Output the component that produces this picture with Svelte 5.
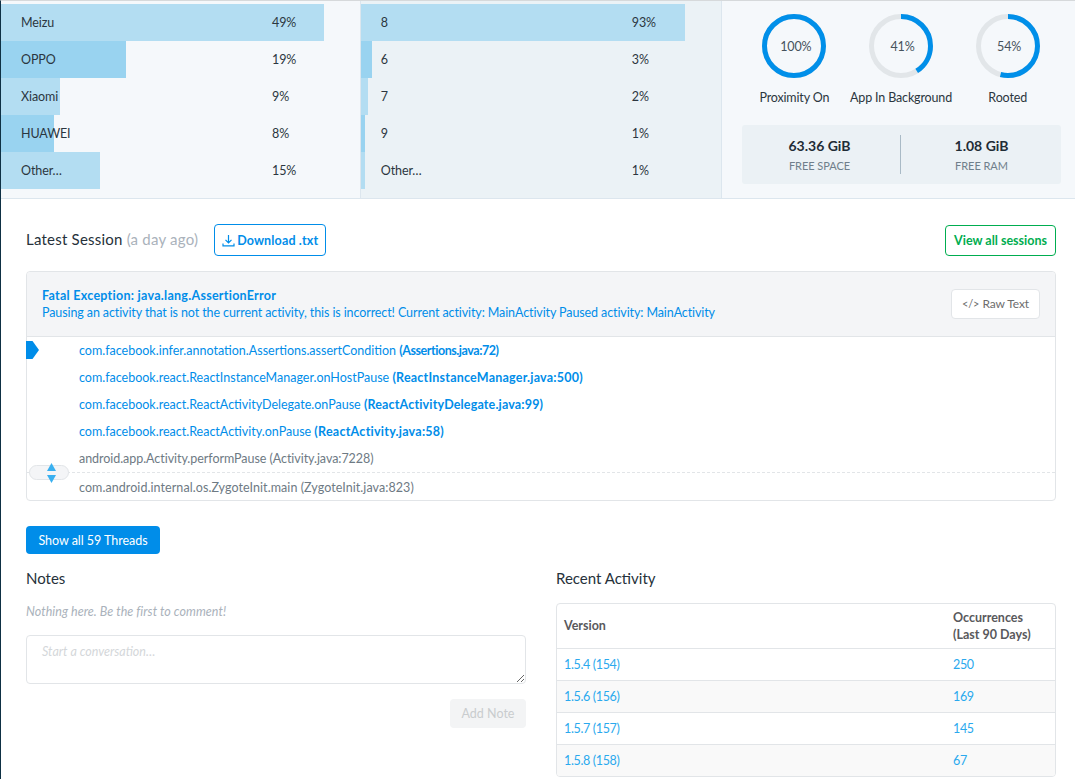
<script>
  const brands = [
    { label: 'Meizu', pct: '49%', w: 323, dark: false },
    { label: 'OPPO', pct: '19%', w: 125, dark: true },
    { label: 'Xiaomi', pct: '9%', w: 59, dark: false },
    { label: 'HUAWEI', pct: '8%', w: 53, dark: true },
    { label: 'Other…', pct: '15%', w: 99, dark: false }
  ];
  const models = [
    { label: '8', pct: '93%', w: 324, dark: false },
    { label: '6', pct: '3%', w: 11, dark: true },
    { label: '7', pct: '2%', w: 7, dark: false },
    { label: '9', pct: '1%', w: 4, dark: true },
    { label: 'Other…', pct: '1%', w: 4, dark: false }
  ];
  const C = 2 * Math.PI * 29.5;
  const rings = [
    { label: 'Proximity On', v: 100 },
    { label: 'App In Background', v: 41 },
    { label: 'Rooted', v: 54 }
  ];
  const frames = [
    ['com.facebook.infer.annotation.Assertions.assertCondition', '(Assertions.java:72)', -0.45],
    ['com.facebook.react.ReactInstanceManager.onHostPause', '(ReactInstanceManager.java:500)', 0.22],
    ['com.facebook.react.ReactActivityDelegate.onPause', '(ReactActivityDelegate.java:99)', 0.16],
    ['com.facebook.react.ReactActivity.onPause', '(ReactActivity.java:58)', 0.25]
  ];
  const versions = [
    ['1.5.4 (154)', '250'],
    ['1.5.6 (156)', '169'],
    ['1.5.7 (157)', '145'],
    ['1.5.8 (158)', '67']
  ];
</script>

<div class="page">
  <section class="top">
    <div class="col col-a">
      {#each brands as b}
        <div class="row">
          <span class="fill" class:dark={b.dark} style="width:{b.w}px"></span>
          <span class="lab">{b.label}</span><span class="pct">{b.pct}</span>
        </div>
      {/each}
    </div>
    <div class="col col-b">
      {#each models as b}
        <div class="row">
          <span class="fill" class:dark={b.dark} style="width:{b.w}px"></span>
          <span class="lab">{b.label}</span><span class="pct">{b.pct}</span>
        </div>
      {/each}
    </div>
    <div class="col-c">
      <div class="rings">
        {#each rings as r}
          <div class="ring">
            <div class="dial">
              <svg width="64" height="64" viewBox="0 0 64 64">
                <circle cx="32" cy="32" r="29.5" fill="none" stroke="#e2e6e9" stroke-width="5" />
                <circle cx="32" cy="32" r="29.5" fill="none" stroke="#008fe9" stroke-width="5"
                  stroke-dasharray="{(C * r.v) / 100} {C}" transform="rotate(-90 32 32)" />
              </svg>
              <span class="val">{r.v}%</span>
            </div>
            <div class="ring-label">{r.label}</div>
          </div>
        {/each}
      </div>
      <div class="free">
        <div class="free-cell left"><b>63.36 GiB</b><span>FREE SPACE</span></div>
        <i class="free-div"></i>
        <div class="free-cell right"><b>1.08 GiB</b><span>FREE RAM</span></div>
      </div>
    </div>
  </section>

  <main class="main">
    <div class="head">
      <h2>Latest Session <span class="ago">(a day ago)</span></h2>
      <button class="btn-dl">
        <svg width="13" height="13" viewBox="0 0 13 13" fill="none" stroke="#008de9" stroke-width="1.2">
          <path d="M6.5 1v7.5M3.5 5.8l3 3 3-3M1 9.5v2.3h11V9.5" />
        </svg>
        Download .txt
      </button>
      <button class="btn-green">View all sessions</button>
    </div>

    <div class="session">
      <div class="ex">
        <div class="ex-text">
          <strong>Fatal Exception: java.lang.AssertionError</strong>
          <div class="msg">Pausing an activity that is not the current activity, this is incorrect! Current activity: MainActivity Paused activity: MainActivity</div>
        </div>
        <button class="raw"><span class="code">&lt;/&gt;</span><span>Raw Text</span></button>
      </div>
      <div class="stack">
        <svg class="marker" width="13" height="18" viewBox="0 0 13 18"><path d="M0 0h6.5l6.5 9-6.5 9H0z" fill="#008de9" /></svg>
        {#each frames as f}
          <div class="frame app">{f[0]} <b style="letter-spacing:{f[2]}px">{f[1]}</b></div>
        {/each}
        <div class="frame sys perform">android.app.Activity.performPause (Activity.java:7228)</div>
        <div class="fold">
          <span class="pill">
            <svg width="9" height="20" viewBox="0 0 9 20"><path d="M4.5 0L9 8H0zM4.5 20L0 12h9z" fill="#39b0f0" /></svg>
          </span>
        </div>
        <div class="frame sys last">com.android.internal.os.ZygoteInit.main (ZygoteInit.java:823)</div>
      </div>
    </div>

    <button class="threads">Show all 59 Threads</button>

    <div class="bottom">
      <div class="notes">
        <h2>Notes</h2>
        <p class="empty">Nothing here. Be the first to comment!</p>
        <textarea placeholder="Start a conversation…"></textarea>
        <div class="note-act"><button class="add">Add Note</button></div>
      </div>
      <div class="recent">
        <h2>Recent Activity</h2>
        <table>
          <thead>
            <tr><th class="ver">Version</th><th class="c2">Occurrences<br />(Last 90 Days)</th></tr>
          </thead>
          <tbody>
            {#each versions as v}
              <tr><td>{v[0]}</td><td class="c2">{v[1]}</td></tr>
            {/each}
          </tbody>
        </table>
      </div>
    </div>
  </main>
</div>

<style>
  :global(body) { margin: 0; background: #fff; }
  .page {
    font-family: Lato, "Liberation Sans", sans-serif;
    font-size: 12.5px;
    color: #2b3640;
    border-left: 1px solid #0e3044;
    border-top: 1px solid #d6d9db;
    min-height: 779px;
    box-sizing: border-box;
    overflow: hidden;
  }
  .top {
    display: flex;
    height: 198px;
    box-sizing: border-box;
    border-bottom: 1px solid #dce6ee;
    background: #f5f8fb;
  }
  .col { box-sizing: border-box; padding-top: 3px; }
  .col-a { width: 360px; border-right: 1px solid #dce6ee; }
  .col-b { width: 361px; background: #ebf2f6; border-right: 1px solid #dce6ee; }
  .row { position: relative; height: 37px; display: flex; align-items: center; }
  .fill { position: absolute; left: 0; top: 0; bottom: 0; background: #b3ddf2; }
  .fill.dark { background: #99d3f0; }
  .lab { position: relative; width: 251px; padding-left: 20px; letter-spacing: -.1px; }
  .pct { position: relative; letter-spacing: -.1px; }
  .col-c { flex: 1; padding: 13px 14px 0 20px; }
  .rings { display: flex; justify-content: space-between; width: 320px; margin-left: -0.5px; }
  .ring { width: 107px; display: flex; flex-direction: column; align-items: center; }
  .dial { position: relative; width: 64px; height: 64px; }
  .dial svg { display: block; }
  .val { position: absolute; inset: 0; padding-left: 3px; display: flex; align-items: center; justify-content: center; color: #46525c; letter-spacing: -.1px; }
  .ring-label { margin-top: 12px; white-space: nowrap; line-height: 16px; color: #2b3640; letter-spacing: -.15px; }
  .free {
    margin-top: 19px;
    height: 59px;
    width: 319px;
    background: #ebf1f5;
    border-radius: 3px;
    display: flex;
    align-items: center;
  }
  .free-cell { display: flex; flex-direction: column; align-items: center; padding-top: 3px; }
  .free-cell.left { width: 156px; }
  .free-cell.right { flex: 1; padding-left: 2px; }
  .free-cell b { font-size: 14px; font-weight: 700; color: #1f2c36; line-height: 20px; }
  .free-cell span { font-size: 11px; color: #6f7f8b; line-height: 20px; letter-spacing: -.05px; }
  .free-div { width: 1px; height: 39px; margin-left: 2px; background: #a9bac6; }

  .main { padding: 25px 19px 0 25px; }
  .head { display: flex; align-items: center; height: 32px; }
  h2 { margin: 0; font-size: 15px; font-weight: 400; color: #26313a; }
  .head h2 { letter-spacing: .22px; margin-top: -3px; }
  .ago { color: #aab2bb; }
  button { font-family: inherit; cursor: pointer; }
  .btn-dl {
    margin-left: 16px;
    width: 112px;
    height: 32px;
    padding: 0;
    background: #fff;
    border: 1px solid #008de9;
    border-radius: 4px;
    color: #008de9;
    font-size: 12.5px;
    font-weight: 700;
    letter-spacing: .15px;
    display: flex;
    align-items: center;
    justify-content: center;
    gap: 2px;
  }
  .btn-green {
    margin-left: auto;
    width: 111px;
    height: 31px;
    padding: 0;
    background: #fff;
    border: 1px solid #00ad50;
    border-radius: 4px;
    color: #00ad50;
    font-size: 12.5px;
    font-weight: 700;
  }
  .session {
    margin-top: 15px;
    border: 1px solid #e2e5e8;
    border-radius: 4px;
    height: 230px;
    box-sizing: border-box;
  }
  .ex {
    height: 65px;
    box-sizing: border-box;
    background: #f4f5f7;
    border-bottom: 1px solid #e2e5e8;
    border-radius: 4px 4px 0 0;
    display: flex;
    align-items: center;
    padding: 0 15px;
    justify-content: space-between;
    color: #008de9;
  }
  .ex-text { line-height: 17px; margin-top: -1px; }
  .ex-text strong { letter-spacing: .27px; }
  .msg { letter-spacing: -.1px; }
  .raw {
    width: 89px;
    height: 30px;
    padding: 0 0 2px;
    background: #fff;
    border: 1px solid #e2e5e8;
    border-radius: 4px;
    color: #6d6d6d;
    font-size: 12px;
    letter-spacing: -.1px;
    display: flex;
    align-items: center;
    justify-content: center;
    gap: 3px;
  }
  .code { font-size: 11px; }
  .stack { position: relative; }
  .marker { position: absolute; left: -1px; top: 4px; }
  .frame { height: 27px; line-height: 27px; padding-left: 52px; white-space: nowrap; }
  .app { color: #008de9; }
  .sys { color: #6e7a84; }
  .perform { letter-spacing: -.05px; }
  .fold { height: 1px; border-top: 1px dashed #e2e5e8; position: relative; }
  .pill {
    position: absolute;
    left: 2px;
    top: -8px;
    width: 40px;
    height: 15px;
    box-sizing: border-box;
    padding-left: 4px;
    background: #f4f5f7;
    border: 1px solid #e2e5e8;
    border-radius: 8px;
    display: flex;
    justify-content: center;
    align-items: center;
  }
  .last { line-height: 28px; letter-spacing: .07px; }
  .threads {
    display: block;
    margin-top: 25px;
    width: 134px;
    height: 28px;
    padding: 0;
    background: #008de9;
    border: 0;
    border-radius: 4px;
    color: #fff;
    font-size: 12.5px;
    letter-spacing: -.03px;
  }
  .bottom { display: flex; gap: 30px; margin-top: 15px; }
  .notes { width: 500px; }
  .recent { width: 500px; }
  .bottom h2 { line-height: 18px; }
  .empty { margin: 17px 0 0; font-style: italic; color: #aab2bb; line-height: 16px; letter-spacing: .05px; }
  textarea {
    display: block;
    box-sizing: border-box;
    width: 500px;
    height: 49px;
    margin-top: 15px;
    padding: 8px 15px;
    border: 1px solid #e2e5e8;
    border-radius: 4px;
    font-family: inherit;
    font-size: 12.5px;
    font-style: italic;
    outline: none;
  }
  textarea::placeholder { color: #d4d7da; }
  .note-act { display: flex; justify-content: flex-end; margin-top: 15px; }
  .add {
    width: 76px;
    height: 29px;
    padding: 0;
    border: 0;
    background: #f3f4f5;
    border-radius: 4px;
    color: #c9ccce;
    font-size: 12.5px;
  }
  table {
    margin-top: 16px;
    width: 500px;
    box-sizing: border-box;
    border-collapse: separate;
    border-spacing: 0;
    border: 1px solid #e2e5e8;
    border-radius: 4px;
    table-layout: fixed;
    overflow: hidden;
  }
  th {
    box-sizing: border-box;
    height: 44px;
    text-align: left;
    padding: 0 7px 1px;
    font-weight: 700;
    font-size: 12.5px;
    line-height: 17px;
    color: #59595c;
  }
  th.ver { padding-bottom: 2px; }
  td {
    height: 31px;
    padding: 0 7px;
    border-top: 1px solid #e2e5e8;
    color: #2aa9ee;
    letter-spacing: -.35px;
  }
  tbody tr:nth-child(odd) td { background: #fff; }
  tbody tr:nth-child(even) td { background: #f9f9f9; }
  th.c2 { width: 111px; padding-left: 9px; padding-right: 0; }
  td.c2 { padding-left: 9px; padding-right: 0; }
</style>
